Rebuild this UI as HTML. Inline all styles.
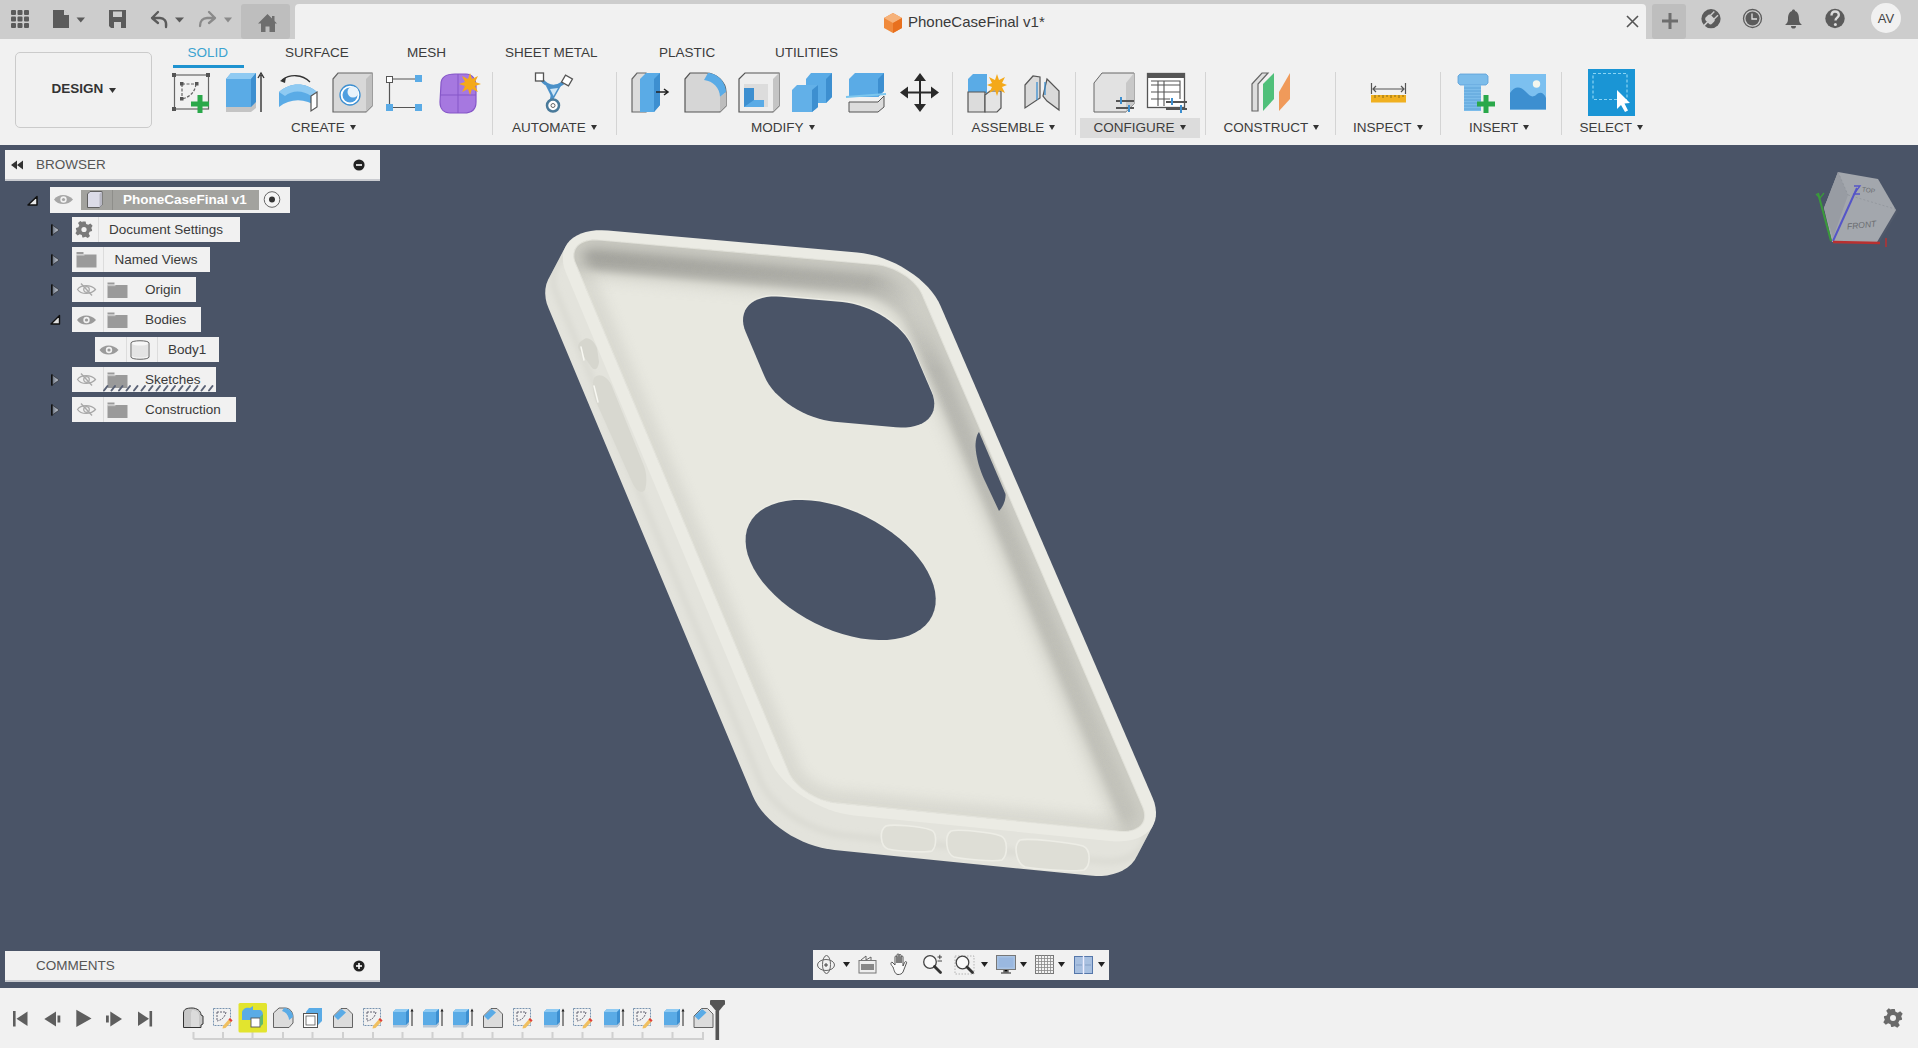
<!DOCTYPE html>
<html><head><meta charset="utf-8">
<style>
*{margin:0;padding:0;box-sizing:border-box}
html,body{width:1918px;height:1048px;overflow:hidden;background:#4a5467;font-family:"Liberation Sans",sans-serif;color:#3c3c3c}
.a{position:absolute}
svg{overflow:visible}
#top{left:0;top:0;width:1918px;height:39px;background:#cdcdcd}
#tb{left:0;top:39px;width:1918px;height:106px;background:#f1f1f1}
#vp{left:0;top:145px;width:1918px;height:843px;background:#4a5467}
#tl{left:0;top:988px;width:1918px;height:60px;background:#f1f1f1}
.tab{font-size:13.5px;line-height:16px;top:45px;color:#3c3c3c;white-space:nowrap}
.lbl{font-size:13.5px;line-height:16px;top:120px;color:#3c3c3c;white-space:nowrap}
.lbl i{display:inline-block;width:0;height:0;border-left:3px solid transparent;border-right:3px solid transparent;border-top:5px solid #333;vertical-align:2px;margin-left:5px}
.sep{width:1px;height:63px;top:72px;background:#d4d4d4}
</style></head><body>
<div id="top" class="a"></div>
<div id="tb" class="a"></div>
<div id="vp" class="a"></div>
<div id="tl" class="a"></div>
<svg class="a" style="left:0;top:0" width="1918" height="39">
<g fill="#5b5b5b">
<rect x="11" y="10" width="5" height="5" rx="1"/><rect x="17.5" y="10" width="5" height="5" rx="1"/><rect x="24" y="10" width="5" height="5" rx="1"/>
<rect x="11" y="16.5" width="5" height="5" rx="1"/><rect x="17.5" y="16.5" width="5" height="5" rx="1"/><rect x="24" y="16.5" width="5" height="5" rx="1"/>
<rect x="11" y="23" width="5" height="5" rx="1"/><rect x="17.5" y="23" width="5" height="5" rx="1"/><rect x="24" y="23" width="5" height="5" rx="1"/>
<path d="M53,10 H64 L69,15 V28 H53 Z"/><path d="M64,9.5 L69.5,15 H64 Z" fill="#cdcdcd"/>
<path d="M76.5,17.5 H85 L80.8,22.5 Z"/>
<path d="M109,10 H126 V28 H111 L109,26 Z M113,11.5 V17 H122 V11.5 Z M114,22 V28 H121 V22 Z" fill-rule="evenodd"/>
<path d="M175,17.5 H184 L179.5,22.5 Z"/>
</g>
<path d="M152,18 L158,12 M152,18 L158,23 M152,18 H160 C164,18 167,21 166,27" fill="none" stroke="#5b5b5b" stroke-width="2.3" stroke-linecap="round" stroke-linejoin="round"/>
<path d="M215,18 L209,12 M215,18 L209,23 M215,18 H207 C203,18 200,21 200,26" fill="none" stroke="#8a8a8a" stroke-width="2.3" stroke-linecap="round" stroke-linejoin="round"/>
<path d="M224,17.5 H232 L228,22.5 Z" fill="#8a8a8a"/>
<rect x="241" y="4" width="49" height="35" rx="3" fill="#bebebe"/>
<path d="M267.5,14 L277,23.5 H275 V32 H269.5 V26.5 H265.5 V32 H261 V23.5 H258 Z" fill="#6e6e6e"/><rect x="272" y="16" width="2.5" height="5" fill="#6e6e6e"/>
<path d="M295,39 V8 Q295,4 299,4 H1642 Q1646,4 1646,8 V39 Z" fill="#f1f1f1"/>
<path d="M1627,16 L1638,27 M1638,16 L1627,27" stroke="#555" stroke-width="1.6"/>
<rect x="1652" y="4" width="34" height="35" rx="3" fill="#bebebe"/>
<path d="M1670,13 V29 M1662,21 H1678" stroke="#6e6e6e" stroke-width="3"/>
<circle cx="1711" cy="18.7" r="9.6" fill="#5b5b5b"/>
<g transform="rotate(45 1710.5 19)" fill="#cdcdcd"><rect x="1706" y="16" width="9" height="7.5" rx="2.5"/><rect x="1707.2" y="11" width="1.4" height="5.5"/><rect x="1712.4" y="11" width="1.4" height="5.5"/><rect x="1709.8" y="23" width="1.5" height="6"/></g>
<circle cx="1752.5" cy="18.5" r="9" fill="none" stroke="#5b5b5b" stroke-width="1.3"/>
<circle cx="1752.5" cy="18.5" r="7" fill="#5b5b5b"/>
<path d="M1752,13.5 V19 H1757" stroke="#e0e0e0" stroke-width="1.3" fill="none"/>
<path d="M1793.5,9.5 C1794.5,9.5 1795,10 1795,11 C1798,12 1799,15 1799,19 C1799,22 1800,23.5 1802,25 H1785 C1787,23.5 1788,22 1788,19 C1788,15 1789,12 1792,11 C1792,10 1792.5,9.5 1793.5,9.5 Z M1791,26 H1796 C1796,28 1795,28.5 1793.5,28.5 C1792,28.5 1791,28 1791,26 Z" fill="#5b5b5b"/>
<circle cx="1835" cy="18.5" r="9.7" fill="#5b5b5b"/>
<path d="M1831.5,15.5 C1831.5,12.5 1833,11.5 1835,11.5 C1837.5,11.5 1838.8,13 1838.8,15 C1838.8,17.5 1835.5,17.8 1835.5,20.5" fill="none" stroke="#dcdcdc" stroke-width="2.4"/>
<circle cx="1835.4" cy="24.5" r="1.5" fill="#dcdcdc"/>
<circle cx="1886" cy="18" r="15" fill="#f1f1f1"/>
</svg>
<div class="a" style="left:1872px;top:11px;font-size:13px;line-height:16px;color:#444;width:28px;text-align:center">AV</div>
<svg class="a" style="left:883px;top:12px" width="20" height="22" viewBox="0 0 20 22">
<path d="M10,1 L19,6 V16 L10,21 L1,16 V6 Z" fill="#f08a3c"/>
<path d="M10,1 L19,6 L10,11 L1,6 Z" fill="#f6b27a"/>
<path d="M10,11 L19,6 V16 L10,21 Z" fill="#e8701e"/>
</svg>
<div class="a" style="left:908px;top:13px;font-size:15px;line-height:18px;color:#3a3a3a;white-space:nowrap">PhoneCaseFinal v1*</div>

<div class="a" style="left:15px;top:52px;width:137px;height:76px;border:1.5px solid #cbcbcb;border-radius:5px"></div>
<div class="a" style="left:51.5px;top:81px;font-size:13.5px;line-height:16px;font-weight:bold;color:#333;white-space:nowrap">DESIGN</div>
<svg class="a" style="left:109px;top:88px" width="8" height="6"><path d="M0,0 H7 L3.5,5 Z" fill="#333"/></svg>
<div class="a tab" style="left:187.5px;color:#3ba3d0">SOLID</div>
<div class="a" style="left:173px;top:65px;width:71px;height:3px;background:#1f93d0"></div>
<div class="a tab" style="left:285px">SURFACE</div>
<div class="a tab" style="left:407px">MESH</div>
<div class="a tab" style="left:505px">SHEET METAL</div>
<div class="a tab" style="left:659px">PLASTIC</div>
<div class="a tab" style="left:775px">UTILITIES</div>
<div class="a lbl" style="left:291px">CREATE<i></i></div>
<div class="a lbl" style="left:512px">AUTOMATE<i></i></div>
<div class="a lbl" style="left:751px">MODIFY<i></i></div>
<div class="a lbl" style="left:971.5px">ASSEMBLE<i></i></div>
<div class="a" style="left:1080px;top:118px;width:120px;height:20px;background:#dcdcdc"></div>
<div class="a lbl" style="left:1093.5px">CONFIGURE<i></i></div>
<div class="a lbl" style="left:1223.5px">CONSTRUCT<i></i></div>
<div class="a lbl" style="left:1353px">INSPECT<i></i></div>
<div class="a lbl" style="left:1469px">INSERT<i></i></div>
<div class="a lbl" style="left:1579.5px">SELECT<i></i></div>
<div class="a sep" style="left:492px"></div>
<div class="a sep" style="left:616px"></div>
<div class="a sep" style="left:952px"></div>
<div class="a sep" style="left:1075px"></div>
<div class="a sep" style="left:1205px"></div>
<div class="a sep" style="left:1335px"></div>
<div class="a sep" style="left:1440px"></div>
<div class="a sep" style="left:1561px"></div>
<svg class="a" style="left:0;top:0" width="1918" height="145">
<!-- sketch -->
<g>
<rect x="174.5" y="75" width="34" height="34" fill="none" stroke="#666" stroke-width="1.2"/>
<rect x="172" y="73" width="4" height="4" fill="#555"/><rect x="206" y="73" width="4" height="4" fill="#555"/><rect x="172" y="107" width="4" height="4" fill="#555"/>
<path d="M182,84 H196 M182,84 V98 M196,84 C195,92 190,97 182,99" fill="none" stroke="#666" stroke-width="1.2" stroke-dasharray="3 1.5"/>
<rect x="180" y="82" width="3.5" height="3.5" fill="#555"/><rect x="195" y="82" width="3.5" height="3.5" fill="#555"/><rect x="180" y="97" width="3.5" height="3.5" fill="#555"/>
<path d="M200,95 V113 M191,104 H209" stroke="#2aa84a" stroke-width="5"/>
</g>
<!-- extrude -->
<g>
<path d="M226,79 L231,73 H256 V105 L251,110 H226 Z" fill="#5aabe6"/>
<path d="M226,79 L231,73 H256 L251,79 Z" fill="#8fcaf2"/>
<path d="M251,79 L256,73 V105 L251,110 Z" fill="#3d8fd0"/>
<path d="M226,107 H251 L256,102 V108 L251,112 H226 Z" fill="#c4c4c4"/>
<path d="M261,112 V75 M258,78 L261,73 L264,78" fill="none" stroke="#333" stroke-width="1.4"/>
</g>
<!-- revolve -->
<g>
<path d="M279,92 C290,82 306,82 317,92 V107 C306,98 290,98 279,107 Z" fill="#5aabe6"/>
<path d="M279,92 C290,82 306,82 317,92 L311,96 C303,90 292,90 285,96 Z" fill="#8fcaf2"/>
<path d="M311,96 L317,92 V107 L311,111 Z" fill="#fff" stroke="#555" stroke-width="1.2"/>
<path d="M310,82 C302,74 290,74 282,80" fill="none" stroke="#333" stroke-width="1.3"/>
<path d="M280,81 L286,77 L285,83 Z" fill="#333"/>
</g>
<!-- hole -->
<g>
<path d="M333,79 L338,73 H372 V106 L366,112 H333 Z" fill="#d8d8d8" stroke="#666" stroke-width="1.2"/>
<path d="M366,79 L372,73 V106 L366,112 Z" fill="#c0c0c0"/>
<circle cx="350" cy="95" r="10" fill="#fff" stroke="#3d8fd0" stroke-width="1.3"/>
<circle cx="350" cy="95" r="7.5" fill="#4f9fe0"/>
<circle cx="353" cy="92" r="5.5" fill="#eaf4fb"/>
</g>
<!-- pattern -->
<g>
<rect x="386.5" y="76.5" width="6" height="6" fill="#fff" stroke="#555"/>
<rect x="415" y="75" width="7" height="7" fill="#5aabe6"/>
<rect x="386" y="104" width="7" height="7" fill="#5aabe6"/><rect x="415" y="104" width="7" height="7" fill="#5aabe6"/>
<path d="M393,79 H415 M389.5,83 V104 M393,107.5 H415" stroke="#555" stroke-width="1.2"/>
</g>
<!-- form -->
<g>
<path d="M441,84 C441,76 448,74 455,74 H466 C472,74 476,79 476,86 V102 C476,110 471,113 464,113 H450 C444,113 440,109 440,102 Z" fill="#a678e0" stroke="#8556c8" stroke-width="1.2"/>
<path d="M458,74 V113 M440,95 H476" stroke="#8556c8" stroke-width="1"/>
<path d="M470,73 L472,79 L478,76 L475,82 L481,84 L475,86 L478,92 L472,89 L470,95 L468,89 L462,92 L465,86 L459,84 L465,82 L462,76 L468,79 Z" fill="#f4a91a"/>
</g>
<!-- automate -->
<g>
<path d="M541,79 C548,88 556,88 563,83 M554,87 L551,103" stroke="#4a90c8" stroke-width="3.5" fill="none"/>
<path d="M546,86 L562,84 L553,100 Z" fill="#4a90c8"/><path d="M550,89 L558,88 L553.5,96 Z" fill="#cfe6f6"/>
<rect x="535.5" y="73" width="8" height="8" fill="#fff" stroke="#555" stroke-width="1.3"/>
<rect x="563" y="76.5" width="8" height="8" fill="#fff" stroke="#555" stroke-width="1.3" transform="rotate(30 567 80.5)"/>
<circle cx="553" cy="105.5" r="6" fill="#fff" stroke="#4a7a9a" stroke-width="2.5"/>
<circle cx="553" cy="105.5" r="2" fill="none" stroke="#666" stroke-width="1"/>
</g>
<!-- press pull -->
<g>
<path d="M632,79 L637,73 H646 V112 H632 Z" fill="#dcdcdc" stroke="#666" stroke-width="1.2"/>
<path d="M640,79 L646,73 H660 V105 L654,112 H640 Z" fill="#5aabe6"/>
<path d="M654,79 L660,73 V105 L654,112 Z" fill="#3d8fd0"/>
<path d="M656,92 H667 M664,89 L668,92 L664,95" stroke="#222" stroke-width="1.5" fill="none"/>
</g>
<!-- fillet -->
<g>
<path d="M685,79 L690,73 H706 C716,73 726,82 726,92 V106 L720,112 H685 Z" fill="#d6d6d6" stroke="#555" stroke-width="1.2"/>
<path d="M708,73 C717,73 726,82 726,92 L720,97 C720,88 713,81 704,80 Z" fill="#5aabe6"/>
<path d="M720,97 L726,92 V106 L720,112 Z" fill="#bdbdbd"/>
</g>
<!-- shell -->
<g>
<path d="M739,79 L745,73 H779 V106 L773,112 H739 Z" fill="#eeeeee" stroke="#555" stroke-width="1.2"/>
<path d="M773,79 L779,73 V106 L773,112 Z" fill="#c4c4c4"/>
<rect x="744" y="84" width="24" height="23" fill="#dcdcdc"/>
<path d="M744,88 H754 V100 H764 V107 H744 Z" fill="#5aabe6"/>
<path d="M744,88 H754 V100 L744,107 Z" fill="#3d8fd0"/>
</g>
<!-- combine -->
<g>
<path d="M806,79 L811,73 H832 V97 L826,103 H806 Z" fill="#5aabe6"/>
<path d="M826,79 L832,73 V97 L826,103 Z" fill="#3d8fd0"/>
<path d="M792,90 L797,85 H818 V107 L812,112 H792 Z" fill="#62b0e8"/>
<path d="M812,90 L818,85 V107 L812,112 Z" fill="#3d8fd0"/>
</g>
<!-- split -->
<g>
<path d="M849,79 L855,73 H884 V91 L878,97 H849 Z" fill="#5aabe6"/>
<path d="M878,79 L884,73 V91 L878,97 Z" fill="#3d8fd0"/>
<path d="M849,102 H878 L884,96 V107 L878,112 H849 Z" fill="#dcdcdc" stroke="#555" stroke-width="1"/>
<path d="M846,97 L886,94" stroke="#7cc6ee" stroke-width="2"/>
</g>
<!-- move -->
<g fill="#2a2a2a">
<path d="M920,73 L926,81 H914 Z M920,112 L926,104 H914 Z M900,92.5 L908,86.5 V98.5 Z M939,92.5 L931,86.5 V98.5 Z"/>
<path d="M920,79 V106 M906,92.5 H933" stroke="#2a2a2a" stroke-width="2"/>
</g>
<!-- assemble new component -->
<g>
<path d="M968,79 L973,74 H987 V93 H968 Z" fill="#5aabe6"/>
<path d="M968,92 H985 V112 H968 Z" fill="#dcdcdc" stroke="#555" stroke-width="1.2"/>
<path d="M985,95 L990,91 H1001 V108 L997,112 H985 Z" fill="#e4e4e4" stroke="#555" stroke-width="1.2"/>
<path d="M997,74 L999,80 L1005,77 L1002,83 L1007,85 L1002,87 L1005,93 L999,90 L997,96 L995,90 L989,93 L992,87 L987,85 L992,83 L989,77 L995,80 Z" fill="#f4a91a"/>
</g>
<!-- joint -->
<g fill="#dadada" stroke="#555" stroke-width="1.2">
<path d="M1025,85 L1033,76 L1040,77 V98 L1025,108 Z"/>
<path d="M1043,96 L1047,79 L1059,91 V110 L1047,101 Z"/>
<path d="M1037,82 V100 M1045,82 V95" stroke="#3d8fd0" stroke-width="1.3" fill="none"/>
</g>
<!-- configure cube -->
<g>
<path d="M1094,83 L1102,73 H1134 V104 L1126,112 H1094 Z" fill="#e2e2e2" stroke="#666" stroke-width="1"/>
<path d="M1126,83 L1134,73 V104 L1126,112 Z" fill="#c8c8c8"/>
<path d="M1116,101 H1134 M1116,108 H1134" stroke="#555" stroke-width="2"/>
<path d="M1121,97 V104 M1129,105 V112" stroke="#3d8fd0" stroke-width="2"/>
</g>
<!-- configure table -->
<g>
<rect x="1147.5" y="73.5" width="37" height="34" fill="#fff" stroke="#555" stroke-width="1.3"/>
<rect x="1147" y="73" width="38" height="5" fill="#555"/>
<path d="M1151,85 H1180 M1151,92 H1180 M1151,99 H1170 M1158,81 V106 M1164,81 V106 M1151,81 H1180 V99" stroke="#555" stroke-width="1.1" fill="none"/>
<path d="M1166,102 H1187 M1166,109 H1187" stroke="#555" stroke-width="2"/>
<path d="M1172,98 V105 M1181,105 V113" stroke="#3d8fd0" stroke-width="2"/>
</g>
<!-- construct -->
<g>
<path d="M1252,84 L1262,73 H1268 L1258,84 V111 H1252 Z" fill="#dedede" stroke="#666" stroke-width="1.2"/>
<path d="M1263,84 L1274,73 V99 L1263,111 Z" fill="#50c07a"/>
<path d="M1279,92 L1290,73 V99 L1279,111 Z" fill="#f09a5a"/>
</g>
<!-- inspect -->
<g>
<path d="M1371.5,83 V94 M1405.5,83 V94 M1373,89 H1404 M1376,86 L1373,89 L1376,92 M1401,86 L1404,89 L1401,92" stroke="#555" stroke-width="1.2" fill="none"/>
<rect x="1371" y="95" width="35" height="7.5" fill="#f0b020"/>
<path d="M1375,95 V98 M1379,95 V97 M1383,95 V98 M1387,95 V97 M1391,95 V98 M1395,95 V97 M1399,95 V98 M1403,95 V97" stroke="#8a6a10" stroke-width="1"/>
</g>
<!-- insert bolt -->
<g>
<path d="M1458,76 L1460,74 H1486 L1488,76 V83 L1486,85 H1460 L1458,83 Z" fill="#7cbcea" stroke="#5aa0d8" stroke-width="0.8"/>
<rect x="1464" y="85" width="17" height="26" fill="#7cbcea"/>
<path d="M1464,88 H1481 M1464,91 H1481 M1464,94 H1481 M1464,97 H1481 M1464,100 H1481 M1464,103 H1481 M1464,106 H1481 M1464,109 H1481" stroke="#5aa0d8" stroke-width="0.9"/>
<path d="M1486,95 V113 M1477,104 H1495" stroke="#2aa84a" stroke-width="5"/>
</g>
<!-- insert image -->
<g>
<rect x="1510" y="74" width="36" height="35.5" fill="#7cc0f0"/>
<path d="M1510,93 C1515,86 1520,86 1526,92 C1530,96 1532,98 1536,95 C1540,91 1544,93 1546,98 V109.5 H1510 Z" fill="#3d8fd0"/>
<circle cx="1536.5" cy="84" r="3.7" fill="#f4f6ee"/>
</g>
<!-- select -->
<g>
<rect x="1588" y="69" width="47" height="47" fill="#1a95d5"/>
<rect x="1593" y="73.5" width="34" height="26" fill="none" stroke="#8ad4f4" stroke-width="1.2" stroke-dasharray="3 2"/>
<path d="M1617,90 L1617,109 L1621,105 L1625,112 L1628,110.5 L1624.5,103.5 L1630,103 Z" fill="#fff"/>
</g>
</svg>

<svg class="a" style="left:0;top:0" width="1918" height="1048" viewBox="0 0 1918 1048">
<defs>
<clipPath id="cpi"><path d="M875.4,264.4 L878.9,264.8 L882.5,265.5 L886.1,266.4 L889.7,267.6 L893.3,269.0 L896.9,270.6 L900.3,272.4 L903.6,274.4 L906.8,276.6 L909.7,278.9 L912.5,281.3 L915.0,283.8 L917.2,286.4 L919.2,289.0 L920.8,291.7 L922.1,294.3 L1142.8,807.1 L1143.8,809.8 L1144.4,812.4 L1144.7,815.0 L1144.6,817.5 L1144.2,819.8 L1143.4,821.9 L1142.2,823.9 L1140.7,825.7 L1138.9,827.3 L1136.7,828.6 L1134.3,829.7 L1131.6,830.6 L1128.7,831.2 L1125.5,831.5 L1122.2,831.5 L1118.8,831.3 L835.6,802.9 L832.1,802.5 L828.4,801.7 L824.8,800.7 L821.1,799.5 L817.5,798.0 L813.9,796.3 L810.4,794.4 L807.1,792.3 L803.9,790.1 L800.9,787.7 L798.2,785.2 L795.6,782.6 L793.4,780.0 L791.5,777.3 L789.8,774.5 L788.5,771.8 L575.5,263.4 L574.5,260.9 L573.9,258.3 L573.7,255.9 L573.8,253.5 L574.3,251.3 L575.1,249.2 L576.3,247.3 L577.7,245.5 L579.5,244.0 L581.6,242.7 L584.0,241.6 L586.6,240.8 L589.4,240.2 L592.4,239.8 L595.6,239.7 L599.0,239.9Z"/></clipPath>
<clipPath id="cps"><path d="M545.2,293.3 L545.4,289.1 L545.6,288.0 L546.4,284.0 L547.9,280.3 L548.3,279.3 L549.3,277.4 L559.3,258.4 L562.3,252.7 L563.3,250.8 L563.8,249.9 L565.8,246.4 L568.5,243.4 L569.2,242.6 L572.4,239.9 L576.1,237.5 L580.3,235.6 L581.4,235.2 L586.0,233.7 L590.9,232.7 L596.3,232.1 L601.9,231.9 L607.8,232.2 L857.1,254.2 L863.2,255.0 L869.5,256.2 L875.9,257.8 L882.2,259.9 L888.5,262.4 L894.7,265.2 L900.8,268.4 L906.6,271.9 L912.1,275.6 L917.4,279.7 L922.2,283.9 L926.6,288.3 L930.5,292.9 L933.9,297.5 L936.8,302.1 L939.0,306.8 L1151.0,798.6 L1152.7,803.4 L1153.1,804.5 L1154.2,809.2 L1154.7,813.7 L1154.6,818.1 L1154.4,819.2 L1153.6,823.3 L1152.1,827.2 L1151.6,828.1 L1150.6,830.0 L1138.1,853.8 L1137.1,855.7 L1136.6,856.6 L1134.6,860.2 L1133.9,861.0 L1131.3,864.2 L1130.4,865.0 L1127.2,867.8 L1123.4,870.1 L1122.4,870.7 L1118.1,872.6 L1113.4,874.1 L1112.3,874.3 L1107.2,875.4 L1101.8,875.9 L1096.0,876.0 L1090.0,875.6 L834.3,850.0 L828.2,849.1 L827.4,849.0 L821.3,847.7 L815.1,846.0 L808.9,843.9 L802.7,841.4 L796.7,838.6 L790.8,835.4 L785.1,831.8 L779.8,828.1 L774.7,824.0 L770.1,819.8 L769.5,819.3 L765.1,814.8 L761.3,810.2 L757.9,805.5 L755.1,800.8 L752.8,796.1 L548.8,308.8 L548.4,307.7 L546.7,303.2 L545.7,298.7 L545.3,294.4Z"/></clipPath>
<filter id="bl3" x="-20%" y="-20%" width="140%" height="140%"><feGaussianBlur stdDeviation="3"/></filter>
<filter id="bl6" x="-20%" y="-20%" width="140%" height="140%"><feGaussianBlur stdDeviation="6"/></filter>
<filter id="bl1" x="-20%" y="-20%" width="140%" height="140%"><feGaussianBlur stdDeviation="1"/></filter>
<linearGradient id="wallg" gradientUnits="userSpaceOnUse" x1="620" y1="240" x2="1120" y2="760"><stop offset="0" stop-color="#a0a09a"/><stop offset="0.45" stop-color="#b4b4ae"/><stop offset="1" stop-color="#c2c2ba"/></linearGradient>
<radialGradient id="wallc" gradientUnits="userSpaceOnUse" cx="935" cy="300" r="70"><stop offset="0" stop-color="#dcdcd4" stop-opacity="1"/><stop offset="1" stop-color="#dcdcd4" stop-opacity="0"/></radialGradient>
<radialGradient id="flg" cx="0.5" cy="0.5" r="0.6"><stop offset="0" stop-color="#eaeae2"/><stop offset="1" stop-color="#e2e2da"/></radialGradient>
</defs>
<path d="M545.2,293.3 L545.4,289.1 L545.6,288.0 L546.4,284.0 L547.9,280.3 L548.3,279.3 L549.3,277.4 L559.3,258.4 L562.3,252.7 L563.3,250.8 L563.8,249.9 L565.8,246.4 L568.5,243.4 L569.2,242.6 L572.4,239.9 L576.1,237.5 L580.3,235.6 L581.4,235.2 L586.0,233.7 L590.9,232.7 L596.3,232.1 L601.9,231.9 L607.8,232.2 L857.1,254.2 L863.2,255.0 L869.5,256.2 L875.9,257.8 L882.2,259.9 L888.5,262.4 L894.7,265.2 L900.8,268.4 L906.6,271.9 L912.1,275.6 L917.4,279.7 L922.2,283.9 L926.6,288.3 L930.5,292.9 L933.9,297.5 L936.8,302.1 L939.0,306.8 L1151.0,798.6 L1152.7,803.4 L1153.1,804.5 L1154.2,809.2 L1154.7,813.7 L1154.6,818.1 L1154.4,819.2 L1153.6,823.3 L1152.1,827.2 L1151.6,828.1 L1150.6,830.0 L1138.1,853.8 L1137.1,855.7 L1136.6,856.6 L1134.6,860.2 L1133.9,861.0 L1131.3,864.2 L1130.4,865.0 L1127.2,867.8 L1123.4,870.1 L1122.4,870.7 L1118.1,872.6 L1113.4,874.1 L1112.3,874.3 L1107.2,875.4 L1101.8,875.9 L1096.0,876.0 L1090.0,875.6 L834.3,850.0 L828.2,849.1 L827.4,849.0 L821.3,847.7 L815.1,846.0 L808.9,843.9 L802.7,841.4 L796.7,838.6 L790.8,835.4 L785.1,831.8 L779.8,828.1 L774.7,824.0 L770.1,819.8 L769.5,819.3 L765.1,814.8 L761.3,810.2 L757.9,805.5 L755.1,800.8 L752.8,796.1 L548.8,308.8 L548.4,307.7 L546.7,303.2 L545.7,298.7 L545.3,294.4Z" fill="#e3e3dc"/>
<g clip-path="url(#cps)"><path d="M857.2,252.5 L863.5,253.2 L869.9,254.5 L876.3,256.1 L882.8,258.2 L889.2,260.7 L895.6,263.6 L901.7,266.8 L907.6,270.4 L913.3,274.2 L918.6,278.3 L923.5,282.7 L927.9,287.1 L931.9,291.8 L935.4,296.5 L938.3,301.2 L940.6,305.9 L1152.6,797.8 L1154.4,802.6 L1155.5,807.4 L1156.0,811.9 L1155.9,816.3 L1155.1,820.5 L1153.6,824.3 L1151.6,827.9 L1148.9,831.0 L1145.6,833.8 L1141.8,836.2 L1137.4,838.2 L1132.6,839.7 L1127.4,840.8 L1121.8,841.3 L1115.8,841.4 L1109.6,841.0 L854.0,815.4 L847.6,814.5 L841.2,813.2 L834.6,811.4 L828.1,809.2 L821.6,806.5 L815.2,803.5 L809.0,800.1 L803.0,796.4 L797.3,792.4 L792.0,788.2 L787.1,783.7 L782.6,779.1 L778.6,774.3 L775.1,769.5 L772.2,764.6 L769.9,759.8 L565.9,272.5 L564.2,267.8 L563.2,263.3 L562.8,258.9 L563.0,254.7 L563.8,250.7 L565.3,247.0 L567.3,243.6 L569.9,240.5 L573.1,237.8 L576.9,235.4 L581.1,233.5 L585.7,232.0 L590.8,230.9 L596.2,230.3 L601.9,230.2 L607.9,230.5Z" fill="none" stroke="#d2d2ca" stroke-width="3" filter="url(#bl3)" transform="translate(-10,20)"/></g>
<path d="M857.2,252.5 L863.5,253.2 L869.9,254.5 L876.3,256.1 L882.8,258.2 L889.2,260.7 L895.6,263.6 L901.7,266.8 L907.6,270.4 L913.3,274.2 L918.6,278.3 L923.5,282.7 L927.9,287.1 L931.9,291.8 L935.4,296.5 L938.3,301.2 L940.6,305.9 L1152.6,797.8 L1154.4,802.6 L1155.5,807.4 L1156.0,811.9 L1155.9,816.3 L1155.1,820.5 L1153.6,824.3 L1151.6,827.9 L1148.9,831.0 L1145.6,833.8 L1141.8,836.2 L1137.4,838.2 L1132.6,839.7 L1127.4,840.8 L1121.8,841.3 L1115.8,841.4 L1109.6,841.0 L854.0,815.4 L847.6,814.5 L841.2,813.2 L834.6,811.4 L828.1,809.2 L821.6,806.5 L815.2,803.5 L809.0,800.1 L803.0,796.4 L797.3,792.4 L792.0,788.2 L787.1,783.7 L782.6,779.1 L778.6,774.3 L775.1,769.5 L772.2,764.6 L769.9,759.8 L565.9,272.5 L564.2,267.8 L563.2,263.3 L562.8,258.9 L563.0,254.7 L563.8,250.7 L565.3,247.0 L567.3,243.6 L569.9,240.5 L573.1,237.8 L576.9,235.4 L581.1,233.5 L585.7,232.0 L590.8,230.9 L596.2,230.3 L601.9,230.2 L607.9,230.5Z" fill="#ebebe4"/>
<path d="M875.4,264.4 L878.9,264.8 L882.5,265.5 L886.1,266.4 L889.7,267.6 L893.3,269.0 L896.9,270.6 L900.3,272.4 L903.6,274.4 L906.8,276.6 L909.7,278.9 L912.5,281.3 L915.0,283.8 L917.2,286.4 L919.2,289.0 L920.8,291.7 L922.1,294.3 L1142.8,807.1 L1143.8,809.8 L1144.4,812.4 L1144.7,815.0 L1144.6,817.5 L1144.2,819.8 L1143.4,821.9 L1142.2,823.9 L1140.7,825.7 L1138.9,827.3 L1136.7,828.6 L1134.3,829.7 L1131.6,830.6 L1128.7,831.2 L1125.5,831.5 L1122.2,831.5 L1118.8,831.3 L835.6,802.9 L832.1,802.5 L828.4,801.7 L824.8,800.7 L821.1,799.5 L817.5,798.0 L813.9,796.3 L810.4,794.4 L807.1,792.3 L803.9,790.1 L800.9,787.7 L798.2,785.2 L795.6,782.6 L793.4,780.0 L791.5,777.3 L789.8,774.5 L788.5,771.8 L575.5,263.4 L574.5,260.9 L573.9,258.3 L573.7,255.9 L573.8,253.5 L574.3,251.3 L575.1,249.2 L576.3,247.3 L577.7,245.5 L579.5,244.0 L581.6,242.7 L584.0,241.6 L586.6,240.8 L589.4,240.2 L592.4,239.8 L595.6,239.7 L599.0,239.9Z" fill="url(#wallg)"/>
<path d="M875.4,264.4 L878.9,264.8 L882.5,265.5 L886.1,266.4 L889.7,267.6 L893.3,269.0 L896.9,270.6 L900.3,272.4 L903.6,274.4 L906.8,276.6 L909.7,278.9 L912.5,281.3 L915.0,283.8 L917.2,286.4 L919.2,289.0 L920.8,291.7 L922.1,294.3 L1142.8,807.1 L1143.8,809.8 L1144.4,812.4 L1144.7,815.0 L1144.6,817.5 L1144.2,819.8 L1143.4,821.9 L1142.2,823.9 L1140.7,825.7 L1138.9,827.3 L1136.7,828.6 L1134.3,829.7 L1131.6,830.6 L1128.7,831.2 L1125.5,831.5 L1122.2,831.5 L1118.8,831.3 L835.6,802.9 L832.1,802.5 L828.4,801.7 L824.8,800.7 L821.1,799.5 L817.5,798.0 L813.9,796.3 L810.4,794.4 L807.1,792.3 L803.9,790.1 L800.9,787.7 L798.2,785.2 L795.6,782.6 L793.4,780.0 L791.5,777.3 L789.8,774.5 L788.5,771.8 L575.5,263.4 L574.5,260.9 L573.9,258.3 L573.7,255.9 L573.8,253.5 L574.3,251.3 L575.1,249.2 L576.3,247.3 L577.7,245.5 L579.5,244.0 L581.6,242.7 L584.0,241.6 L586.6,240.8 L589.4,240.2 L592.4,239.8 L595.6,239.7 L599.0,239.9Z" fill="url(#wallc)"/>
<g clip-path="url(#cpi)">
<path d="M875.4,264.4 L878.9,264.8 L882.5,265.5 L886.1,266.4 L889.7,267.6 L893.3,269.0 L896.9,270.6 L900.3,272.4 L903.6,274.4 L906.8,276.6 L909.7,278.9 L912.5,281.3 L915.0,283.8 L917.2,286.4 L919.2,289.0 L920.8,291.7 L922.1,294.3 L1142.8,807.1 L1143.8,809.8 L1144.4,812.4 L1144.7,815.0 L1144.6,817.5 L1144.2,819.8 L1143.4,821.9 L1142.2,823.9 L1140.7,825.7 L1138.9,827.3 L1136.7,828.6 L1134.3,829.7 L1131.6,830.6 L1128.7,831.2 L1125.5,831.5 L1122.2,831.5 L1118.8,831.3 L835.6,802.9 L832.1,802.5 L828.4,801.7 L824.8,800.7 L821.1,799.5 L817.5,798.0 L813.9,796.3 L810.4,794.4 L807.1,792.3 L803.9,790.1 L800.9,787.7 L798.2,785.2 L795.6,782.6 L793.4,780.0 L791.5,777.3 L789.8,774.5 L788.5,771.8 L575.5,263.4 L574.5,260.9 L573.9,258.3 L573.7,255.9 L573.8,253.5 L574.3,251.3 L575.1,249.2 L576.3,247.3 L577.7,245.5 L579.5,244.0 L581.6,242.7 L584.0,241.6 L586.6,240.8 L589.4,240.2 L592.4,239.8 L595.6,239.7 L599.0,239.9Z" fill="none" stroke="#d6d6ce" stroke-width="14" filter="url(#bl6)"/>
<path d="M859.4,294.8 L862.9,295.2 L866.5,295.9 L870.1,296.8 L873.7,298.0 L877.3,299.4 L880.9,301.0 L884.3,302.8 L887.6,304.8 L890.8,307.0 L893.7,309.3 L896.5,311.7 L899.0,314.2 L901.2,316.8 L903.2,319.4 L904.8,322.1 L906.1,324.7 L1126.8,837.5 L1127.8,840.2 L1128.4,842.8 L1128.7,845.4 L1128.6,847.9 L1128.2,850.2 L1127.4,852.3 L1126.2,854.3 L1124.7,856.1 L1122.9,857.7 L1120.7,859.0 L1118.3,860.1 L1115.6,861.0 L1112.7,861.6 L1109.5,861.9 L1106.2,861.9 L1102.8,861.7 L819.6,833.3 L816.1,832.9 L812.4,832.1 L808.8,831.1 L805.1,829.9 L801.5,828.4 L797.9,826.7 L794.4,824.8 L791.1,822.7 L787.9,820.5 L784.9,818.1 L782.2,815.6 L779.6,813.0 L777.4,810.4 L775.5,807.7 L773.8,804.9 L772.5,802.2 L559.5,293.8 L558.5,291.3 L557.9,288.7 L557.7,286.3 L557.8,283.9 L558.3,281.7 L559.1,279.6 L560.3,277.7 L561.7,275.9 L563.5,274.4 L565.6,273.1 L568.0,272.0 L570.6,271.2 L573.4,270.6 L576.4,270.2 L579.6,270.1 L583.0,270.3Z" fill="#e8e8e0" filter="url(#bl3)"/>
<path d="M859.4,294.8 L862.9,295.2 L866.5,295.9 L870.1,296.8 L873.7,298.0 L877.3,299.4 L880.9,301.0 L884.3,302.8 L887.6,304.8 L890.8,307.0 L893.7,309.3 L896.5,311.7 L899.0,314.2 L901.2,316.8 L903.2,319.4 L904.8,322.1 L906.1,324.7 L1126.8,837.5 L1127.8,840.2 L1128.4,842.8 L1128.7,845.4 L1128.6,847.9 L1128.2,850.2 L1127.4,852.3 L1126.2,854.3 L1124.7,856.1 L1122.9,857.7 L1120.7,859.0 L1118.3,860.1 L1115.6,861.0 L1112.7,861.6 L1109.5,861.9 L1106.2,861.9 L1102.8,861.7 L819.6,833.3 L816.1,832.9 L812.4,832.1 L808.8,831.1 L805.1,829.9 L801.5,828.4 L797.9,826.7 L794.4,824.8 L791.1,822.7 L787.9,820.5 L784.9,818.1 L782.2,815.6 L779.6,813.0 L777.4,810.4 L775.5,807.7 L773.8,804.9 L772.5,802.2 L559.5,293.8 L558.5,291.3 L557.9,288.7 L557.7,286.3 L557.8,283.9 L558.3,281.7 L559.1,279.6 L560.3,277.7 L561.7,275.9 L563.5,274.4 L565.6,273.1 L568.0,272.0 L570.6,271.2 L573.4,270.6 L576.4,270.2 L579.6,270.1 L583.0,270.3Z" fill="none" stroke="#c8c8c0" stroke-width="16" filter="url(#bl6)" opacity="0.5"/>
<path d="M875.4,264.4 L878.9,264.8 L882.5,265.5 L886.1,266.4 L889.7,267.6 L893.3,269.0 L896.9,270.6 L900.3,272.4 L903.6,274.4 L906.8,276.6 L909.7,278.9 L912.5,281.3 L915.0,283.8 L917.2,286.4 L919.2,289.0 L920.8,291.7 L922.1,294.3 L1142.8,807.1 L1143.8,809.8 L1144.4,812.4 L1144.7,815.0 L1144.6,817.5 L1144.2,819.8 L1143.4,821.9 L1142.2,823.9 L1140.7,825.7 L1138.9,827.3 L1136.7,828.6 L1134.3,829.7 L1131.6,830.6 L1128.7,831.2 L1125.5,831.5 L1122.2,831.5 L1118.8,831.3 L835.6,802.9 L832.1,802.5 L828.4,801.7 L824.8,800.7 L821.1,799.5 L817.5,798.0 L813.9,796.3 L810.4,794.4 L807.1,792.3 L803.9,790.1 L800.9,787.7 L798.2,785.2 L795.6,782.6 L793.4,780.0 L791.5,777.3 L789.8,774.5 L788.5,771.8 L575.5,263.4 L574.5,260.9 L573.9,258.3 L573.7,255.9 L573.8,253.5 L574.3,251.3 L575.1,249.2 L576.3,247.3 L577.7,245.5 L579.5,244.0 L581.6,242.7 L584.0,241.6 L586.6,240.8 L589.4,240.2 L592.4,239.8 L595.6,239.7 L599.0,239.9Z" fill="none" stroke="#c0c0b8" stroke-width="26" filter="url(#bl6)" opacity="0.35"/>
</g>
<path d="M875.4,264.4 L878.9,264.8 L882.5,265.5 L886.1,266.4 L889.7,267.6 L893.3,269.0 L896.9,270.6 L900.3,272.4 L903.6,274.4 L906.8,276.6 L909.7,278.9 L912.5,281.3 L915.0,283.8 L917.2,286.4 L919.2,289.0 L920.8,291.7 L922.1,294.3 L1142.8,807.1 L1143.8,809.8 L1144.4,812.4 L1144.7,815.0 L1144.6,817.5 L1144.2,819.8 L1143.4,821.9 L1142.2,823.9 L1140.7,825.7 L1138.9,827.3 L1136.7,828.6 L1134.3,829.7 L1131.6,830.6 L1128.7,831.2 L1125.5,831.5 L1122.2,831.5 L1118.8,831.3 L835.6,802.9 L832.1,802.5 L828.4,801.7 L824.8,800.7 L821.1,799.5 L817.5,798.0 L813.9,796.3 L810.4,794.4 L807.1,792.3 L803.9,790.1 L800.9,787.7 L798.2,785.2 L795.6,782.6 L793.4,780.0 L791.5,777.3 L789.8,774.5 L788.5,771.8 L575.5,263.4 L574.5,260.9 L573.9,258.3 L573.7,255.9 L573.8,253.5 L574.3,251.3 L575.1,249.2 L576.3,247.3 L577.7,245.5 L579.5,244.0 L581.6,242.7 L584.0,241.6 L586.6,240.8 L589.4,240.2 L592.4,239.8 L595.6,239.7 L599.0,239.9Z" fill="none" stroke="#e6e6de" stroke-width="1.2" opacity="0.8"/>
<path d="M842.2,302.1 L847.5,302.7 L852.9,303.8 L858.3,305.2 L863.7,306.9 L869.1,309.0 L874.4,311.5 L879.6,314.2 L884.6,317.2 L889.3,320.4 L893.8,323.9 L897.9,327.5 L901.6,331.3 L905.0,335.1 L907.9,339.1 L910.4,343.1 L912.3,347.0 L931.5,391.7 L933.0,395.6 L933.9,399.5 L934.3,403.2 L934.1,406.8 L933.5,410.2 L932.3,413.3 L930.5,416.3 L928.3,418.9 L925.6,421.2 L922.4,423.2 L918.9,424.8 L914.9,426.1 L910.6,427.0 L905.9,427.5 L901.0,427.6 L895.9,427.3 L834.5,421.7 L829.2,421.1 L823.8,420.0 L818.4,418.6 L813.0,416.8 L807.6,414.7 L802.3,412.2 L797.1,409.5 L792.1,406.5 L787.4,403.2 L783.0,399.8 L778.9,396.1 L775.1,392.4 L771.8,388.5 L768.9,384.5 L766.5,380.5 L764.6,376.6 L745.7,332.1 L744.3,328.2 L743.4,324.4 L743.0,320.7 L743.2,317.1 L743.9,313.8 L745.1,310.6 L746.8,307.7 L749.0,305.1 L751.7,302.8 L754.8,300.8 L758.4,299.2 L762.3,297.9 L766.6,297.0 L771.2,296.5 L776.1,296.4 L781.1,296.7Z" fill="#ecece4" transform="translate(0,-1.5)"/>
<path d="M842.2,302.1 L847.5,302.7 L852.9,303.8 L858.3,305.2 L863.7,306.9 L869.1,309.0 L874.4,311.5 L879.6,314.2 L884.6,317.2 L889.3,320.4 L893.8,323.9 L897.9,327.5 L901.6,331.3 L905.0,335.1 L907.9,339.1 L910.4,343.1 L912.3,347.0 L931.5,391.7 L933.0,395.6 L933.9,399.5 L934.3,403.2 L934.1,406.8 L933.5,410.2 L932.3,413.3 L930.5,416.3 L928.3,418.9 L925.6,421.2 L922.4,423.2 L918.9,424.8 L914.9,426.1 L910.6,427.0 L905.9,427.5 L901.0,427.6 L895.9,427.3 L834.5,421.7 L829.2,421.1 L823.8,420.0 L818.4,418.6 L813.0,416.8 L807.6,414.7 L802.3,412.2 L797.1,409.5 L792.1,406.5 L787.4,403.2 L783.0,399.8 L778.9,396.1 L775.1,392.4 L771.8,388.5 L768.9,384.5 L766.5,380.5 L764.6,376.6 L745.7,332.1 L744.3,328.2 L743.4,324.4 L743.0,320.7 L743.2,317.1 L743.9,313.8 L745.1,310.6 L746.8,307.7 L749.0,305.1 L751.7,302.8 L754.8,300.8 L758.4,299.2 L762.3,297.9 L766.6,297.0 L771.2,296.5 L776.1,296.4 L781.1,296.7Z" fill="#4a5467"/>
<path d="M931.0,578.4 L933.5,585.2 L935.1,591.8 L935.7,598.3 L935.5,604.5 L934.3,610.3 L932.2,615.7 L929.3,620.7 L925.5,625.2 L920.8,629.2 L915.4,632.6 L909.3,635.4 L902.5,637.6 L895.1,639.1 L887.1,639.9 L878.8,640.1 L870.0,639.6 L861.0,638.4 L851.8,636.5 L842.4,634.1 L833.1,630.9 L823.8,627.3 L814.7,623.0 L805.9,618.2 L797.4,613.0 L789.3,607.4 L781.7,601.4 L774.6,595.1 L768.3,588.6 L762.6,581.9 L757.6,575.0 L753.5,568.2 L750.2,561.3 L747.7,554.6 L746.2,548.0 L745.6,541.6 L745.8,535.4 L747.0,529.6 L749.1,524.2 L752.0,519.3 L755.8,514.8 L760.5,510.8 L765.8,507.4 L771.9,504.7 L778.7,502.5 L786.0,501.0 L793.9,500.1 L802.2,499.9 L810.9,500.4 L819.9,501.6 L829.1,503.4 L838.4,505.8 L847.7,508.9 L856.9,512.6 L866.0,516.8 L874.9,521.5 L883.4,526.7 L891.5,532.3 L899.2,538.3 L906.2,544.6 L912.7,551.1 L918.4,557.8 L923.4,564.6 L927.6,571.5Z" fill="#ecece4" transform="translate(0,-1.5)"/>
<path d="M931.0,578.4 L933.5,585.2 L935.1,591.8 L935.7,598.3 L935.5,604.5 L934.3,610.3 L932.2,615.7 L929.3,620.7 L925.5,625.2 L920.8,629.2 L915.4,632.6 L909.3,635.4 L902.5,637.6 L895.1,639.1 L887.1,639.9 L878.8,640.1 L870.0,639.6 L861.0,638.4 L851.8,636.5 L842.4,634.1 L833.1,630.9 L823.8,627.3 L814.7,623.0 L805.9,618.2 L797.4,613.0 L789.3,607.4 L781.7,601.4 L774.6,595.1 L768.3,588.6 L762.6,581.9 L757.6,575.0 L753.5,568.2 L750.2,561.3 L747.7,554.6 L746.2,548.0 L745.6,541.6 L745.8,535.4 L747.0,529.6 L749.1,524.2 L752.0,519.3 L755.8,514.8 L760.5,510.8 L765.8,507.4 L771.9,504.7 L778.7,502.5 L786.0,501.0 L793.9,500.1 L802.2,499.9 L810.9,500.4 L819.9,501.6 L829.1,503.4 L838.4,505.8 L847.7,508.9 L856.9,512.6 L866.0,516.8 L874.9,521.5 L883.4,526.7 L891.5,532.3 L899.2,538.3 L906.2,544.6 L912.7,551.1 L918.4,557.8 L923.4,564.6 L927.6,571.5Z" fill="#4a5467"/>
<!-- right side slot -->
<path d="M979,432 L1005.5,494 C1006,500 1003,507 999,511 L984,479 C980,470 976,458 975.5,446 C975.5,440 977,434 979,432 Z" fill="#4a5467"/>
<!-- left buttons -->
<g>
<path d="M583,340 C587,336 593,339 597,348 L599,362 C598,370 594,372 590,365 L579,350 C577,345 579,342 583,340 Z" fill="#d6d6ce"/>
<path d="M594,378 C598,373 606,375 611,384 L644,466 C647,474 647,484 645,490 C642,494 637,492 633,484 L598,406 C594,398 591,386 594,378 Z" fill="#d8d8d0"/>
<path d="M581,347 L584,360 M594,386 L598,402" stroke="#f8f8f2" stroke-width="1.5" stroke-linecap="round"/>
</g>
<!-- bottom ports -->
<g fill="#deded6" stroke="#ededE6" stroke-width="1.6">
<path d="M886,826 C892,824 920,826 931,830 C937,832 937,846 932,851 C924,853 896,851 888,849 C880,846 879,830 886,826 Z"/>
<path d="M951,831 C958,829 990,832 1001,836 C1008,839 1008,855 1002,860 C993,862 962,859 954,857 C946,854 944,836 951,831 Z"/>
<path d="M1020,840 C1028,838 1068,842 1083,846 C1091,849 1091,866 1084,870 C1073,872 1034,869 1025,867 C1016,863 1013,845 1020,840 Z"/>
</g>
</svg>
<style>
.bx{position:absolute;background:#f1f1f1;height:25px}
.tx{position:absolute;font-size:13.5px;line-height:16px;color:#3a3a3a;white-space:nowrap}
.dv{position:absolute;width:1px;height:25px;background:#dcdcdc}
</style>
<div class="a" style="left:5px;top:150px;width:375px;height:31px;background:#f1f1f1;border-bottom:2px solid #c9cbd0"></div>
<svg class="a" style="left:11px;top:160px" width="14" height="10"><path d="M0,5 L6,0.5 V9.5 Z M6,5 L12,0.5 V9.5 Z" fill="#333"/></svg>
<div class="tx" style="left:36px;top:157px;font-size:13.5px;color:#555">BROWSER</div>
<svg class="a" style="left:352px;top:158px" width="14" height="14"><circle cx="7" cy="7" r="5.6" fill="#222"/><rect x="4" y="6.2" width="6" height="1.6" fill="#fff"/></svg>
<!-- row0 -->
<svg class="a" style="left:27px;top:195px" width="12" height="11"><path d="M1,10 L10,1.5 V10 Z" fill="#e8e8e8" stroke="#111" stroke-width="1.5" stroke-linejoin="round"/></svg>
<div class="bx" style="left:50px;top:187px;width:240px;height:26px"></div>
<div class="a" style="left:81px;top:190px;width:178px;height:20px;background:#a2a29e"></div>
<div class="a" style="left:112px;top:190px;width:1px;height:20px;background:#8e8e8a"></div>
<div class="tx" style="left:123px;top:192px;font-weight:bold;color:#fff">PhoneCaseFinal v1</div>
<svg class="a" style="left:0;top:0" width="400" height="430">
<g fill="#f1f1f1">
</g>
<!-- cube in row0 -->
<path d="M87.5,194 L90,191.5 H102 V205 L99.5,207.5 H87.5 Z" fill="#dcdcE8" stroke="#555" stroke-width="0.9"/>
<path d="M99.5,194 L102,191.5 V205 L99.5,207.5 Z" fill="#b8b8c4"/>
<circle cx="272" cy="199.5" r="7.8" fill="#f4f4f4" stroke="#666" stroke-width="1"/>
<circle cx="272" cy="199.5" r="3" fill="#333"/>
</svg>
<!-- generic rows -->
<div class="bx" style="left:72px;top:217px;width:168px"></div>
<div class="dv" style="left:98px;top:217px"></div>
<div class="tx" style="left:109px;top:222px">Document Settings</div>
<div class="bx" style="left:72px;top:247px;width:138px"></div>
<div class="dv" style="left:103px;top:247px"></div>
<div class="tx" style="left:114.5px;top:252px">Named Views</div>
<div class="bx" style="left:72px;top:277px;width:124px"></div>
<div class="dv" style="left:103px;top:277px"></div>
<div class="tx" style="left:145px;top:282px">Origin</div>
<div class="bx" style="left:72px;top:307px;width:129px"></div>
<div class="dv" style="left:103px;top:307px"></div>
<div class="tx" style="left:145px;top:312px">Bodies</div>
<div class="bx" style="left:95px;top:337px;width:124px"></div>
<div class="dv" style="left:126px;top:337px"></div>
<div class="dv" style="left:157px;top:337px"></div>
<div class="tx" style="left:168px;top:342px">Body1</div>
<div class="bx" style="left:72px;top:367px;width:144px"></div>
<div class="dv" style="left:103px;top:367px"></div>
<div class="tx" style="left:145px;top:372px">Sketches</div>
<div class="bx" style="left:72px;top:397px;width:164px"></div>
<div class="dv" style="left:103px;top:397px"></div>
<div class="tx" style="left:145px;top:402px">Construction</div>
<svg class="a" style="left:0;top:0" width="400" height="430">
<defs>
<linearGradient id="trg" x1="0" x2="1"><stop offset="0" stop-color="#5a6472"/><stop offset="1" stop-color="#d6dae4"/></linearGradient>
<g id="tri"><path d="M0.8,0 V11 L8,5.5 Z" fill="url(#trg)" stroke="#222" stroke-width="0.6"/><path d="M0.8,0 V11" stroke="#111" stroke-width="1.6"/></g>
<g id="eye"><path d="M0,6 C4,0 14,0 19,6 C14,12 4,12 0,6 Z" fill="#9a9a9a"/><circle cx="9.5" cy="6" r="3.2" fill="#f1f1f1"/><circle cx="9.5" cy="6" r="1.6" fill="#9a9a9a"/></g>
<g id="eyex"><path d="M0.5,6 C4,0.8 14,0.8 18.5,6 C14,11.2 4,11.2 0.5,6 Z" fill="none" stroke="#a8a8a8" stroke-width="1.2"/><circle cx="9.5" cy="6" r="2.8" fill="none" stroke="#a8a8a8" stroke-width="1.2"/><path d="M4,0 L15,12" stroke="#a8a8a8" stroke-width="1.3"/></g>
<g id="fold"><path d="M0,2.5 H7 V0.5 H0 Z" fill="#9a9a9a"/><path d="M0,3 H20 V16 H0 Z" fill="#9a9a9a"/><path d="M0,3 H8 V4.2 H0 Z" fill="#f1f1f1" opacity="0.5"/></g>
</defs>
<use href="#tri" x="51" y="224.5"/>
<use href="#tri" x="51" y="254.5"/>
<use href="#tri" x="51" y="284.5"/>
<use href="#tri" x="51" y="374.5"/>
<use href="#tri" x="51" y="404.5"/>
<path d="M51,324 L59.5,315.5 V324 Z" fill="#e0e0e0" stroke="#111" stroke-width="1.4" stroke-linejoin="round"/>
<use href="#eye" x="54" y="193.5" opacity="0.85"/>
<use href="#eye" x="77" y="314"/>
<use href="#eye" x="99.5" y="344"/>
<use href="#eyex" x="77" y="283.5"/>
<use href="#eyex" x="77" y="373.5"/>
<use href="#eyex" x="77" y="403.5"/>
<use href="#fold" x="76.5" y="251.5"/>
<use href="#fold" x="107.5" y="282"/>
<use href="#fold" x="107.5" y="312"/>
<use href="#fold" x="107.5" y="372"/>
<use href="#fold" x="107.5" y="402"/>
<!-- gear -->
<g transform="translate(84,229.5)">
<path d="M-1.6,-8 H1.6 L2.2,-5.6 L4.3,-4.7 L6.4,-6 L8.6,-3.8 L7.3,-1.6 L8.1,0.6 L8,1.6 L5.6,2.2 L4.7,4.3 L6,6.4 L3.8,8.6 L1.6,7.3 L-0.6,8.1 L-1.6,8 L-2.2,5.6 L-4.3,4.7 L-6.4,6 L-8.6,3.8 L-7.3,1.6 L-8.1,-0.6 L-8,-1.6 L-5.6,-2.2 L-4.7,-4.3 L-6,-6.4 L-3.8,-8.6 L-1.6,-7.3 Z" fill="#7a7a7a"/>
<circle r="2.6" fill="#f1f1f1"/>
</g>
<!-- body icon -->
<path d="M131,343 C131,340 149,340 149,343 V357 C149,360 131,360 131,357 Z" fill="#f6f6f6" stroke="#666" stroke-width="1"/>
<path d="M132,344 C135,346 145,346 148,344 V356 C145,358 135,358 132,356 Z" fill="#e4e4e4"/>
<!-- sketches dashes -->
<path d="M104.0,390.5 L107.5,386 M111.5,390.5 L115.0,386 M119.0,390.5 L122.5,386 M126.5,390.5 L130.0,386 M134.0,390.5 L137.5,386 M141.5,390.5 L145.0,386 M149.0,390.5 L152.5,386 M156.5,390.5 L160.0,386 M164.0,390.5 L167.5,386 M171.5,390.5 L175.0,386 M179.0,390.5 L182.5,386 M186.5,390.5 L190.0,386 M194.0,390.5 L197.5,386 M201.5,390.5 L205.0,386 M209.0,390.5 L212.5,386" stroke="#5a6276" stroke-width="2" stroke-linecap="round"/>
</svg>
<!-- comments -->
<div class="a" style="left:5px;top:951px;width:375px;height:31px;background:#f1f1f1;border-bottom:2px solid #c9cbd0"></div>
<div class="tx" style="left:36px;top:958px;color:#555">COMMENTS</div>
<svg class="a" style="left:352px;top:959px" width="14" height="14"><circle cx="7" cy="7" r="5.6" fill="#222"/><rect x="4" y="6.2" width="6" height="1.6" fill="#fff"/><rect x="6.2" y="4" width="1.6" height="6" fill="#fff"/></svg>

<svg class="a" style="left:0;top:988px" width="1918" height="60" viewBox="0 988 1918 60">
<defs>
<g id="t_sk"><rect x="0.5" y="0.5" width="17" height="17" fill="none" stroke="#6a88a8" stroke-width="0.9" stroke-dasharray="2 1"/><path d="M4,4 H13 M4,4 V12 M13,4 C12,9 9,12 4,13" fill="none" stroke="#556" stroke-width="0.9" stroke-dasharray="2 1"/><path d="M10,18 L17,10 L19.5,12.5 L12.5,20 L9.5,20.5 Z" fill="#f0c060"/><path d="M17,10 L19.5,12.5 L18,14 L15.5,11.5 Z" fill="#e04040"/></g>
<g id="t_ex"><path d="M0,4 L3,1 H16 V16 L13,19 H0 Z" fill="#5aabe6"/><path d="M0,4 L3,1 H16 L13,4 Z" fill="#8fcaf2"/><path d="M13,4 L16,1 V16 L13,19 Z" fill="#3d8fd0"/><path d="M0,17 H13 L16,14 V16.5 L13,19.5 H0 Z" fill="#b8c8d8"/><path d="M19,18 V2" stroke="#222" stroke-width="1"/><path d="M17.5,3.5 L19,0.5 L20.5,3.5 Z" fill="#222"/></g>
<g id="t_ch"><path d="M0.5,8 L8,0.5 H14 L19.5,6 V19.5 H0.5 Z" fill="#dcdcdc" stroke="#555" stroke-width="0.9"/><path d="M1,8 L8.5,1 L13,4.5 L5,12 Z" fill="#5aabe6"/></g>
</defs>
<g fill="#5e5e5e">
<rect x="13" y="1011" width="2.6" height="15.5"/><path d="M27.5,1011.5 V1026 L16.5,1018.8 Z"/>
<path d="M44.3,1019 L56,1011.5 V1026.5 Z"/><rect x="57.5" y="1015.5" width="2.8" height="7"/>
<path d="M76.3,1009.7 V1027 L91.5,1018.4 Z"/>
<rect x="106" y="1015.5" width="2.8" height="7"/><path d="M122,1019 L110.3,1011.5 V1026.5 Z"/>
<path d="M138,1011.5 V1026 L149,1018.8 Z"/><rect x="149.5" y="1011" width="2.6" height="15.5"/>
</g>
<path d="M193.5,1039 H704" stroke="#d0d0d0" stroke-width="2"/>
<g stroke="#d0d0d0" stroke-width="2">
<path d="M193.5,1032 V1039 M223,1032 V1039 M252.5,1032 V1039 M283,1032 V1039 M312.5,1032 V1039 M343,1032 V1039 M373,1032 V1039 M402.5,1032 V1039 M432.5,1032 V1039 M462.5,1032 V1039 M492.5,1032 V1039 M522.5,1032 V1039 M552.5,1032 V1039 M582.5,1032 V1039 M612.5,1032 V1039 M642.5,1032 V1039 M672.5,1032 V1039 M703,1032 V1039"/>
</g>
<rect x="238.5" y="1003" width="28.5" height="29.5" rx="1.5" fill="#e2e42e"/>
<!-- base feature -->
<path d="M183.5,1013 C183.5,1009 187,1008 192,1008 C197,1008 201,1011 201,1015 L203,1016 V1024 L201,1025 V1027.5 H183.5 Z" fill="#c8c8c8" stroke="#333" stroke-width="1"/>
<path d="M192,1010 C196,1010 199,1012 199,1016 V1027 H191 V1013 Z" fill="#e8e8e8" opacity="0.6"/>
<use href="#t_sk" x="213" y="1008"/>
<!-- highlighted combine/move -->
<path d="M242,1013 C242,1009 246,1007 250,1008 L253,1006 V1010 H259 C262,1010 263,1012 263,1015 V1020 H242 Z" fill="#5aabe6"/>
<rect x="251" y="1018" width="9" height="9" fill="#fff" stroke="#555" stroke-width="0.9"/>
<path d="M260,1017 L263,1014 V1024 L260,1027 Z" fill="#60b870"/>
<!-- fillet -->
<path d="M273.5,1013 L279,1008 H285 C290,1008 293,1012 293,1017 V1023 L289,1027.5 H273.5 Z" fill="#dcdcdc" stroke="#555" stroke-width="0.9"/>
<path d="M284,1008 C289,1008 293,1012 293,1017 L289,1020 C289,1016 286,1012 282,1011 Z" fill="#5aabe6"/>
<!-- shell -->
<path d="M306,1012 L309,1008 H322 V1021 L318,1025 H306 Z" fill="#5aabe6"/>
<rect x="303.5" y="1013.5" width="14" height="14" fill="#fff" stroke="#555" stroke-width="1"/>
<rect x="306" y="1016" width="9" height="9" fill="#fff" stroke="#555" stroke-width="0.8"/>
<use href="#t_ch" x="333" y="1008"/>
<use href="#t_sk" x="363" y="1008"/>
<use href="#t_ex" x="393" y="1008"/>
<use href="#t_ex" x="423" y="1008"/>
<use href="#t_ex" x="453" y="1008"/>
<use href="#t_ch" x="483" y="1008"/>
<use href="#t_sk" x="513" y="1008"/>
<use href="#t_ex" x="544" y="1008"/>
<use href="#t_sk" x="573" y="1008"/>
<use href="#t_ex" x="604" y="1008"/>
<use href="#t_sk" x="633" y="1008"/>
<use href="#t_ex" x="664" y="1008"/>
<use href="#t_ch" x="693.5" y="1008"/>
<!-- marker -->
<rect x="710" y="1000" width="15" height="5" rx="1" fill="#555"/>
<path d="M711,1005 H724 L719,1011 H716 Z" fill="#555"/>
<rect x="715.5" y="1011" width="3.6" height="29" fill="#555"/>
<!-- gear -->
<g transform="translate(1893,1018)">
<path d="M-1.8,-9 H1.8 L2.5,-6.3 L4.8,-5.3 L7.2,-6.8 L9.7,-4.3 L8.2,-1.8 L9.1,0.7 L9,1.8 L6.3,2.5 L5.3,4.8 L6.8,7.2 L4.3,9.7 L1.8,8.2 L-0.7,9.1 L-1.8,9 L-2.5,6.3 L-4.8,5.3 L-7.2,6.8 L-9.7,4.3 L-8.2,1.8 L-9.1,-0.7 L-9,-1.8 L-6.3,-2.5 L-5.3,-4.8 L-6.8,-7.2 L-4.3,-9.7 L-1.8,-8.2 Z" fill="#6a6a6a"/>
<circle r="3" fill="#f1f1f1"/>
</g>
</svg>
<!-- nav toolbar -->
<div class="a" style="left:813px;top:950px;width:296px;height:30px;background:#f1f1f1"></div>
<svg class="a" style="left:0;top:940px" width="1918" height="48" viewBox="0 940 1918 48">
<g fill="#222">
<path d="M843,962 H850 L846.5,967 Z"/><path d="M981,962 H988 L984.5,967 Z"/><path d="M1020,962 H1027 L1023.5,967 Z"/><path d="M1058,962 H1065 L1061.5,967 Z"/><path d="M1098,962 H1105 L1101.5,967 Z"/>
</g>
<!-- orbit -->
<g fill="none" stroke="#666" stroke-width="1">
<ellipse cx="826" cy="965" rx="8.5" ry="5.5"/>
<ellipse cx="826.5" cy="964.5" rx="4" ry="9"/>
</g>
<path d="M824,965 H828 M826,963 V967" stroke="#333" stroke-width="0.9"/>
<!-- look at -->
<rect x="859" y="960.5" width="17" height="12.5" fill="#eee" stroke="#777" stroke-width="1"/>
<rect x="861" y="964" width="13" height="6" fill="#888"/>
<path d="M861,960 L866,956 V960 L871,957 V960" fill="none" stroke="#666" stroke-width="1"/>
<!-- hand -->
<path d="M893,967 C891,965 890,963 892,962 L895,965 V957 C895,955.5 897,955.5 897,957 V963 V955 C897,953.5 899,953.5 899,955 V963 V955.5 C899,954 901,954 901,955.5 V963 V957 C901,955.5 903,955.5 903,957 V966 L904.5,962.5 C905.5,961 907,961.5 906.5,963 L903,972 C902,974 900,974.5 898,974.5 C895,974.5 894,970 893,967 Z" fill="#fafafa" stroke="#555" stroke-width="1"/>
<!-- zoom -->
<circle cx="930" cy="962" r="6.3" fill="#fafafa" stroke="#444" stroke-width="1.3"/>
<path d="M934.5,966.5 L940.5,972.5" stroke="#333" stroke-width="2.8" stroke-linecap="round"/>
<path d="M937.5,957 H942 M939.8,954.8 V959.2 M937.5,961 H942" stroke="#333" stroke-width="0.9"/>
<!-- fit -->
<rect x="955" y="956" width="19" height="18" fill="none" stroke="#999" stroke-width="0.7" stroke-dasharray="1.5 1.5"/>
<circle cx="962.5" cy="962.5" r="6.3" fill="#fafafa" stroke="#444" stroke-width="1.3"/>
<path d="M967,967 L972.5,972.5" stroke="#333" stroke-width="2.8" stroke-linecap="round"/>
<!-- display -->
<rect x="996.5" y="955.5" width="19" height="14" fill="#aac4e4" stroke="#777" stroke-width="1"/>
<rect x="998.5" y="957.5" width="15" height="10" fill="#9ab8e0"/>
<path d="M1004,970 V972 H1008 V970 M1001,973 H1011" stroke="#666" stroke-width="1.5"/>
<!-- grid -->
<rect x="1035.5" y="955.5" width="18" height="18" fill="#f4f4f4" stroke="#777" stroke-width="1"/>
<path d="M1038.5,955 V974 M1041.5,955 V974 M1044.5,955 V974 M1047.5,955 V974 M1050.5,955 V974 M1035,958.5 H1054 M1035,961.5 H1054 M1035,964.5 H1054 M1035,967.5 H1054 M1035,970.5 H1054" stroke="#888" stroke-width="0.8"/>
<!-- viewports -->
<rect x="1074.5" y="956.5" width="18" height="17" fill="#a8c0e0" stroke="#5577aa" stroke-width="1"/>
<path d="M1083.5,956 V974" stroke="#eef" stroke-width="1.4"/>
<path d="M1076,965 H1082 M1085,965 H1091" stroke="#7a94bc" stroke-width="0.7"/>
</svg>
<!-- viewcube -->
<svg class="a" style="left:1800px;top:160px" width="110" height="100" viewBox="1800 160 110 100">
<path d="M1838,172 L1878,179 L1896,210 L1877,242 L1832,242 L1824,208 Z" fill="#5a6270" opacity="0.35" transform="translate(1.5,2)"/>
<path d="M1838,172 L1878,179 L1896,210 L1877,242 L1832,242 L1824,208 Z" fill="#a3a7ad"/>
<path d="M1824,208 L1838,172 L1848,195 L1833,238 Z" fill="#989ca3"/>
<path d="M1848,195 L1895,209" stroke="#8a8e95" stroke-width="0.6" stroke-dasharray="2 2"/>
<path d="M1838,172 L1848,195" stroke="#8a8e95" stroke-width="0.6" stroke-dasharray="2 2"/>
<path d="M1857,188 L1833,241" stroke="#5555c8" stroke-width="2"/>
<path d="M1833,242 L1880,243" stroke="#b83030" stroke-width="2.5"/>
<path d="M1886,238 L1886,247" stroke="#b83030" stroke-width="1.5"/>
<path d="M1818,193 L1831,241" stroke="#3a9a3a" stroke-width="2"/>
<path d="M1816,194 L1820,198 L1824,193" stroke="#3a9a3a" stroke-width="1.3" fill="none"/>
<text x="1847" y="228" font-family="Liberation Sans" font-style="italic" font-size="8.5" fill="#6a6c70" transform="rotate(-6 1862 226)">FRONT</text>
<text x="1862" y="192" font-family="Liberation Sans" font-size="6.5" fill="#6a6c70" transform="rotate(8 1866 190)">TOP</text>
<path d="M1854,186 H1860 L1854,194 H1860" stroke="#5555c8" stroke-width="1.3" fill="none"/>
</svg>

</body></html>
